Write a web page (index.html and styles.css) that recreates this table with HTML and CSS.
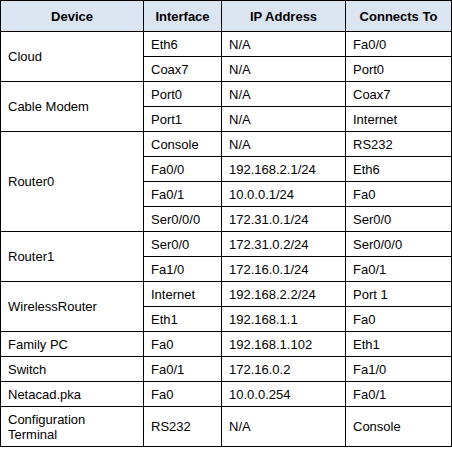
FILE: index.html
```html
<!DOCTYPE html>
<html>
<head>
<meta charset="utf-8">
<link rel="stylesheet" href="styles.css">
</head>
<body>
<table class="conn">
  <colgroup>
    <col class="c1"><col class="c2"><col class="c3"><col class="c4">
  </colgroup>
  <thead>
    <tr class="head"><th>Device</th><th>Interface</th><th>IP Address</th><th>Connects To</th></tr>
  </thead>
  <tbody>
    <tr><td rowspan="2">Cloud</td><td>Eth6</td><td>N/A</td><td>Fa0/0</td></tr>
    <tr><td>Coax7</td><td>N/A</td><td>Port0</td></tr>
    <tr><td rowspan="2">Cable Modem</td><td>Port0</td><td>N/A</td><td>Coax7</td></tr>
    <tr><td>Port1</td><td>N/A</td><td>Internet</td></tr>
    <tr><td rowspan="4">Router0</td><td>Console</td><td>N/A</td><td>RS232</td></tr>
    <tr><td>Fa0/0</td><td>192.168.2.1/24</td><td>Eth6</td></tr>
    <tr><td>Fa0/1</td><td>10.0.0.1/24</td><td>Fa0</td></tr>
    <tr><td>Ser0/0/0</td><td>172.31.0.1/24</td><td>Ser0/0</td></tr>
    <tr><td rowspan="2">Router1</td><td>Ser0/0</td><td>172.31.0.2/24</td><td>Ser0/0/0</td></tr>
    <tr><td>Fa1/0</td><td>172.16.0.1/24</td><td>Fa0/1</td></tr>
    <tr><td rowspan="2">WirelessRouter</td><td>Internet</td><td>192.168.2.2/24</td><td>Port 1</td></tr>
    <tr><td>Eth1</td><td>192.168.1.1</td><td>Fa0</td></tr>
    <tr><td>Family PC</td><td>Fa0</td><td>192.168.1.102</td><td>Eth1</td></tr>
    <tr><td>Switch</td><td>Fa0/1</td><td>172.16.0.2</td><td>Fa1/0</td></tr>
    <tr><td>Netacad.pka</td><td>Fa0</td><td>10.0.0.254</td><td>Fa0/1</td></tr>
    <tr class="tall"><td>Configuration Terminal</td><td>RS232</td><td>N/A</td><td>Console</td></tr>
  </tbody>
</table>
</body>
</html>
```
FILE: styles.css
```css
html, body {
  margin: 0;
  padding: 0;
  background: #ffffff;
}
.conn {
  border-collapse: collapse;
  table-layout: fixed;
  width: 451px;
  font-family: "Liberation Sans", Arial, sans-serif;
  font-size: 13px;
  line-height: 15px;
  color: #000000;
}
.c1 { width: 143px; }
.c2 { width: 78px; }
.c3 { width: 124px; }
.c4 { width: 106px; }
.conn th,
.conn td {
  border: 1px solid #000000;
  padding: 0 7px;
  vertical-align: middle;
  text-align: left;
  height: 25px;
  box-sizing: border-box;
}
.conn th {
  background: #dbe5f1;
  font-weight: bold;
  text-align: center;
  height: 31px;
}
.conn tr.tall td {
  height: 40px;
}
```
